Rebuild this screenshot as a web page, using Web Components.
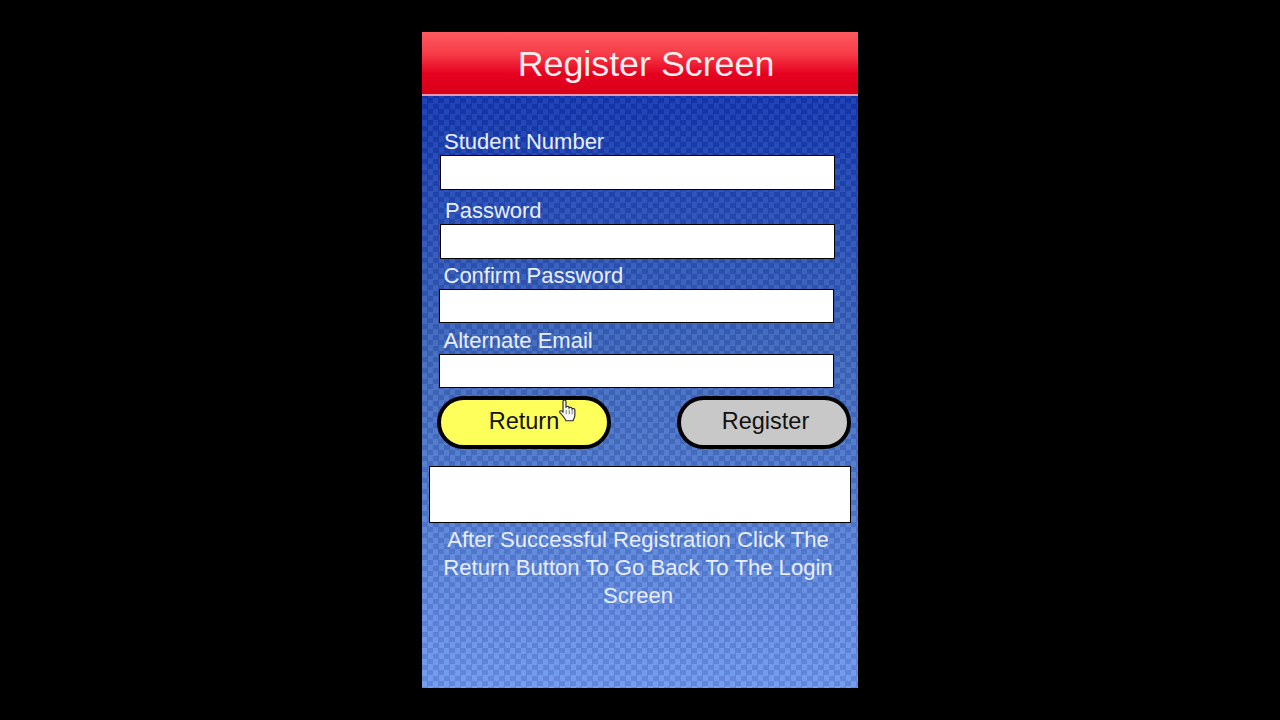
<!DOCTYPE html>
<html>
<head>
<meta charset="utf-8">
<title>Register Screen</title>
<style>
  html, body { margin: 0; height: 100%; background: #000; }
  body {
    display: flex;
    justify-content: center;
    font-family: "Liberation Sans", Arial, sans-serif;
  }
</style>
</head>
<body>
<register-screen>
  <screen-header slot="header">Register Screen</screen-header>
  <form-field style="--indent: 1px; --label-x: 4px">Student Number</form-field>
  <form-field style="--indent: 1px; --label-x: 5px; --top: 14px">Password</form-field>
  <form-field style="--indent: 0px; --label-x: 4.5px; --top: 10px; --box-h: 34px">Confirm Password</form-field>
  <form-field style="--indent: 0px; --label-x: 4.5px; --top: 11px; --box-h: 34px">Alternate Email</form-field>
  <pill-button slot="buttons" color="#ffff5c">Return</pill-button>
  <pill-button slot="buttons" color="#c8c8c8" nudge="3px">Register</pill-button>
  <status-box slot="status"></status-box>
  <span slot="hint">After Successful Registration Click The Return Button To Go Back To The Login Screen</span>
  <hand-cursor slot="cursor"></hand-cursor>
</register-screen>

<script>
class RegisterScreen extends HTMLElement {
  constructor() {
    super();
    this.attachShadow({ mode: "open" });
    this.shadowRoot.innerHTML = `
    <style>
      :host {
        display: block;
        position: relative;
        width: 436px;
        height: 656px;
        margin-top: 32px;
        overflow: hidden;
        background: linear-gradient(#1036b0 10%, #3d68bd 50%, #6d97ee 100%);
      }
      .weave {
        position: absolute;
        inset: 0;
        background: repeating-conic-gradient(#1a206a22 0 25%, #ffffff10 0 50%) 0 0 / 11px 11px;
      }
      .content {
        position: relative;
        display: flex;
        flex-direction: column;
        height: 100%;
      }
      .fields {
        padding: 39px 0 0 17px;
      }
      .buttons {
        display: flex;
        justify-content: space-between;
        padding: 8px 7px 0 15px;
      }
      .status {
        padding: 17px 7px 0 7px;
      }
      .hint {
        width: 400px;
        margin: 3px 0 0 16px;
        text-align: center;
        color: #e8eefa;
        font-size: 22.1px;
        line-height: 28px;
      }
    </style>
    <div class="weave"></div>
    <div class="content">
      <slot name="header"></slot>
      <div class="fields"><slot></slot></div>
      <div class="buttons"><slot name="buttons"></slot></div>
      <div class="status"><slot name="status"></slot></div>
      <div class="hint"><slot name="hint"></slot></div>
    </div>
    <slot name="cursor"></slot>`;
  }
}

class ScreenHeader extends HTMLElement {
  constructor() {
    super();
    this.attachShadow({ mode: "open" });
    this.shadowRoot.innerHTML = `
    <style>
      :host {
        display: flex;
        justify-content: center;
        align-items: center;
        box-sizing: border-box;
        height: 64px;
        padding: 3px 0 0 12px;
        background: linear-gradient(#ff5a60 0%, #f73c48 35%, #e60020 68%, #d80018 100%);
        border-bottom: 2px solid #e898ae;
        color: #f8eeee;
        font-size: 35.8px;
      }
    </style>
    <slot></slot>`;
  }
}

class FormField extends HTMLElement {
  constructor() {
    super();
    this.attachShadow({ mode: "open" });
    this.shadowRoot.innerHTML = `
    <style>
      :host {
        display: block;
        margin-top: var(--top, 0);
        margin-left: var(--indent, 0);
        width: 395px;
        color: #e8eefa;
        font-size: 22px;
      }
      label {
        display: block;
        height: 27px;
        line-height: 27px;
        padding-left: var(--label-x, 4px);
        margin-top: -7px;
        white-space: nowrap;
      }
      .box {
        box-sizing: border-box;
        height: var(--box-h, 35px);
        background: #fff;
        border: 1px solid #000;
      }
    </style>
    <label><slot></slot></label>
    <div class="box"></div>`;
  }
}

class PillButton extends HTMLElement {
  constructor() {
    super();
    this.attachShadow({ mode: "open" });
    this.shadowRoot.innerHTML = `
    <style>
      :host {
        display: flex;
        justify-content: center;
        align-items: center;
        box-sizing: border-box;
        width: 174px;
        height: 53px;
        padding-bottom: 2px;
        padding-left: var(--nudge, 0);
        border: 4px solid #000;
        border-radius: 27px;
        background: var(--fill);
        color: #111;
        font-size: 23.5px;
      }
    </style>
    <slot></slot>`;
  }
  connectedCallback() {
    this.style.setProperty("--fill", this.getAttribute("color"));
    if (this.hasAttribute("nudge")) this.style.setProperty("--nudge", this.getAttribute("nudge"));
  }
}

class StatusBox extends HTMLElement {
  constructor() {
    super();
    this.attachShadow({ mode: "open" });
    this.shadowRoot.innerHTML = `
    <style>
      :host {
        display: block;
        box-sizing: border-box;
        height: 57px;
        background: #fff;
        border: 1px solid #000;
      }
    </style>`;
  }
}

class HandCursor extends HTMLElement {
  constructor() {
    super();
    this.attachShadow({ mode: "open" });
    this.shadowRoot.innerHTML = `
    <style>
      :host {
        position: absolute;
        left: 136px;
        top: 367px;
        width: 20px;
        height: 24px;
      }
      svg { display: block; }
    </style>
    <svg width="20" height="24" viewBox="0 0 16 22" preserveAspectRatio="none">
      <path d="M4 2.2c0-1.6 2.4-1.6 2.4 0v5.6c.2-1.5 2.4-1.5 2.4 0v.8c.2-1.3 2.3-1.3 2.4 0v1c.2-1.1 2.2-1.1 2.3.2v5c0 2-.7 2.6-1.5 5.2H6.4c-.7-2-2-3.6-3.8-6.2C1 12.4.9 10.8 2.2 10.7c.7 0 1.3.7 1.8 1.5z"
        fill="#f6f6f6" stroke="#222" stroke-width=".9" stroke-linejoin="round"/>
      <path d="M6.6 10v4M9 10v4M11.3 10v4" stroke="#666" stroke-width=".7"/>
    </svg>`;
  }
}

customElements.define("register-screen", RegisterScreen);
customElements.define("screen-header", ScreenHeader);
customElements.define("form-field", FormField);
customElements.define("pill-button", PillButton);
customElements.define("status-box", StatusBox);
customElements.define("hand-cursor", HandCursor);
</script>
</body>
</html>
